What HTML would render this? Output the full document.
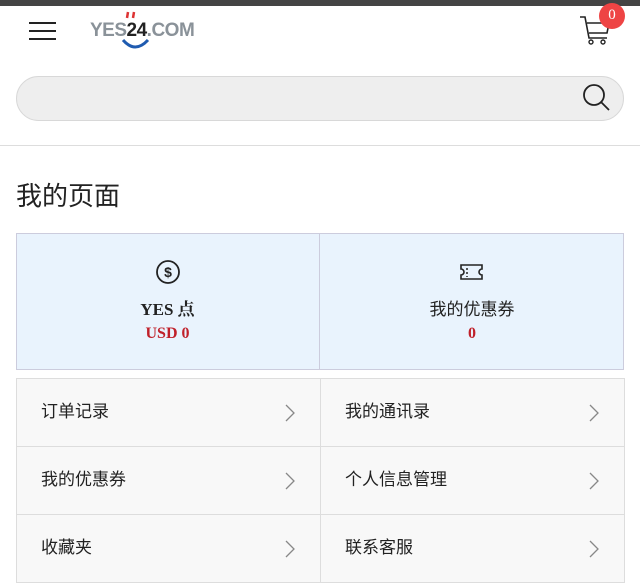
<!DOCTYPE html>
<html><head><meta charset="utf-8"><style>
*{margin:0;padding:0;box-sizing:border-box}
body{width:640px;height:580px;overflow:hidden;background:#fff;font-family:"Liberation Sans","Noto Sans CJK SC",sans-serif;color:#222;position:relative}
.abs{position:absolute}
.cell{position:absolute;width:305px;height:69px;background:#f8f8f8;border:1px solid #ddd;font-size:17px;padding-left:24px;line-height:66px;color:#222}
.cell svg{position:absolute;right:24px;top:24px}
</style></head><body>
<div class="abs" style="left:0;top:0;width:640px;height:6px;background:#444"></div>
<div class="abs" style="left:29px;top:22px;width:27px;height:2px;background:#222"></div>
<div class="abs" style="left:29px;top:30px;width:27px;height:2px;background:#222"></div>
<div class="abs" style="left:29px;top:38px;width:27px;height:2px;background:#222"></div>
<div class="abs" style="left:90px;top:20px;font-size:19px;font-weight:bold;color:#8a9299;letter-spacing:-0.5px">YES<span style="color:#222">24</span>.COM</div>
<svg class="abs" style="left:118px;top:10px" width="40" height="44"><path d="M10 2 l-1 6 M16 2 l-1 6" stroke="#d33" stroke-width="2.5"/><path d="M5 30 Q17 44 30 30" stroke="#1f5bb0" stroke-width="3" fill="none"/></svg>
<svg class="abs" style="left:578px;top:14px" width="36" height="32"><path d="M2 3 h5 l4 21 h18 M9 9 h22 l-2 10 h-18" stroke="#222" stroke-width="1.6" fill="none"/><circle cx="13" cy="28" r="2" fill="none" stroke="#222" stroke-width="1.4"/><circle cx="25" cy="28" r="2" fill="none" stroke="#222" stroke-width="1.4"/></svg>
<div class="abs" style="left:599px;top:3px;width:26px;height:26px;border-radius:50%;background:#ee4444;color:#fff;font-family:'Liberation Serif',serif;font-size:15px;text-align:center;line-height:24px">0</div>
<div class="abs" style="left:16px;top:76px;width:608px;height:45px;border-radius:23px;background:#eee;border:1px solid #d8d8d8"></div>
<svg class="abs" style="left:580px;top:82px" width="32" height="32"><circle cx="14" cy="13" r="10" stroke="#222" stroke-width="1.8" fill="none"/><path d="M21 20 l8 8" stroke="#222" stroke-width="1.8"/></svg>
<div class="abs" style="left:0;top:145px;width:640px;height:1px;background:#ddd"></div>
<div class="abs" style="left:16px;top:176px;font-size:26px;color:#222">我的页面</div>
<div class="abs" style="left:16px;top:233px;width:608px;height:137px;background:#e9f3fd;border:1px solid #ccd"></div>
<div class="abs" style="left:319px;top:234px;width:1px;height:135px;background:#ccd"></div>
<svg class="abs" style="left:155px;top:259px" width="26" height="26"><circle cx="13" cy="13" r="11" stroke="#222" stroke-width="1.8" fill="none"/><text x="13" y="18" text-anchor="middle" font-size="14" font-weight="bold" font-family="Liberation Sans" fill="#222">$</text></svg>
<svg class="abs" style="left:459px;top:263px" width="26" height="18"><path d="M2 2 h21 v4 a3 3 0 0 0 0 6 v4 h-21 v-4 a3 3 0 0 0 0 -6z" stroke="#222" stroke-width="1.6" fill="none"/><path d="M8 5 v2 M8 9 v2 M8 13 v1" stroke="#222" stroke-width="1.5"/></svg>
<div class="abs" style="left:16px;width:303px;top:295px;text-align:center;font-family:'Liberation Serif','Noto Serif CJK SC',serif;font-weight:bold;font-size:17px">YES 点</div>
<div class="abs" style="left:16px;width:303px;top:325px;text-align:center;font-family:'Liberation Serif',serif;font-weight:bold;font-size:16px;color:#c0202a">USD 0</div>
<div class="abs" style="left:320px;width:304px;top:295px;text-align:center;font-size:17px">我的优惠券</div>
<div class="abs" style="left:320px;width:304px;top:325px;text-align:center;font-family:'Liberation Serif',serif;font-weight:bold;font-size:16px;color:#c0202a">0</div>
<div class="cell" style="left:16px;top:378px">订单记录<svg width="12" height="20"><path d="M2 2 l8 8 l-8 8" stroke="#888" stroke-width="1.3" fill="none"/></svg></div>
<div class="cell" style="left:320px;top:378px">我的通讯录<svg width="12" height="20"><path d="M2 2 l8 8 l-8 8" stroke="#888" stroke-width="1.3" fill="none"/></svg></div>
<div class="cell" style="left:16px;top:446px">我的优惠券<svg width="12" height="20"><path d="M2 2 l8 8 l-8 8" stroke="#888" stroke-width="1.3" fill="none"/></svg></div>
<div class="cell" style="left:320px;top:446px">个人信息管理<svg width="12" height="20"><path d="M2 2 l8 8 l-8 8" stroke="#888" stroke-width="1.3" fill="none"/></svg></div>
<div class="cell" style="left:16px;top:514px">收藏夹<svg width="12" height="20"><path d="M2 2 l8 8 l-8 8" stroke="#888" stroke-width="1.3" fill="none"/></svg></div>
<div class="cell" style="left:320px;top:514px">联系客服<svg width="12" height="20"><path d="M2 2 l8 8 l-8 8" stroke="#888" stroke-width="1.3" fill="none"/></svg></div>
</body></html>
